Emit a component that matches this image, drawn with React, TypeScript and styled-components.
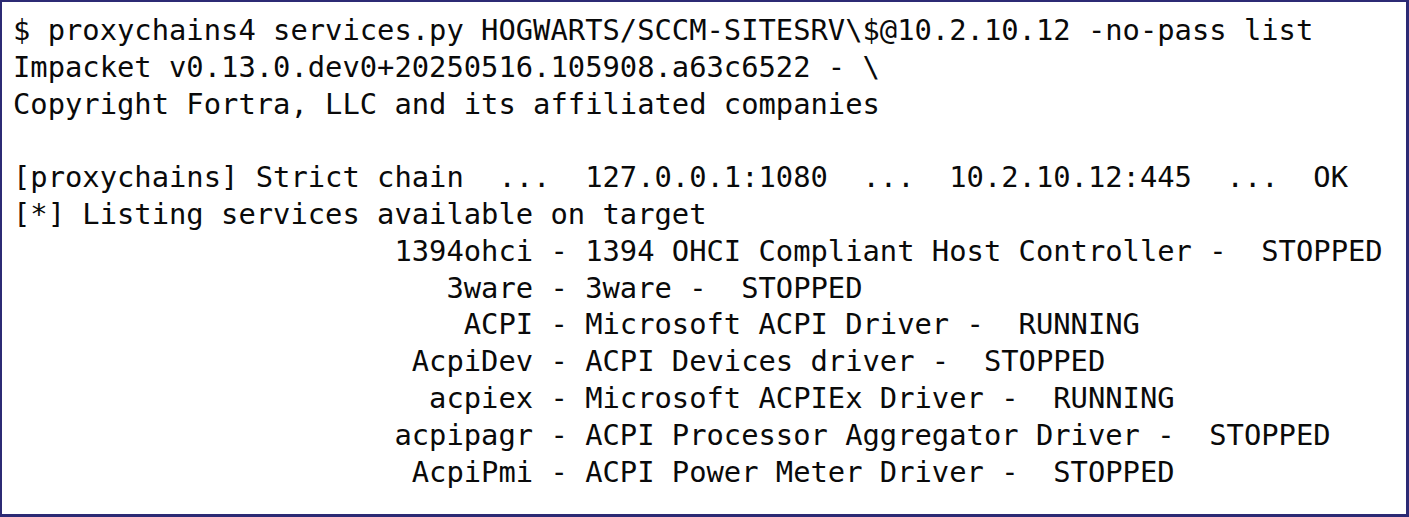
import React from "react";
import styled, { createGlobalStyle } from "styled-components";

const Global = createGlobalStyle`
  html, body {
    margin: 0;
    padding: 0;
    background: #ffffff;
  }
  * { box-sizing: border-box; }
`;

const Frame = styled.div`
  width: 1409px;
  height: 517px;
  background: #ffffff;
  border-style: solid;
  border-color: #2c2a74;
  border-width: 2px 3px 3px 2px;
  padding: 10px 10px 0 11px;
  display: flex;
  flex-direction: column;
  overflow: hidden;
`;

const Line = styled.div`
  font-family: "DejaVu Sans Mono", "Liberation Mono", monospace;
  font-size: 28.8px;
  line-height: 36.8px;
  height: 36.8px;
  color: #0a0a0a;
  white-space: pre;
`;

const pad = (name: string) => name.padStart(30, " ");

const services: [string, string, string][] = [
  ["1394ohci", "1394 OHCI Compliant Host Controller", "STOPPED"],
  ["3ware", "3ware", "STOPPED"],
  ["ACPI", "Microsoft ACPI Driver", "RUNNING"],
  ["AcpiDev", "ACPI Devices driver", "STOPPED"],
  ["acpiex", "Microsoft ACPIEx Driver", "RUNNING"],
  ["acpipagr", "ACPI Processor Aggregator Driver", "STOPPED"],
  ["AcpiPmi", "ACPI Power Meter Driver", "STOPPED"],
];

const header = [
  "$ proxychains4 services.py HOGWARTS/SCCM-SITESRV\\$@10.2.10.12 -no-pass list",
  "Impacket v0.13.0.dev0+20250516.105908.a63c6522 - \\",
  "Copyright Fortra, LLC and its affiliated companies",
  "",
  "[proxychains] Strict chain  ...  127.0.0.1:1080  ...  10.2.10.12:445  ...  OK",
  "[*] Listing services available on target",
];

export default function App() {
  return (
    <>
      <Global />
      <Frame>
        {header.map((t, i) => (
          <Line key={"h" + i}>{t}</Line>
        ))}
        {services.map(([n, d, s]) => (
          <Line key={n}>{`${pad(n)} - ${d} -  ${s}`}</Line>
        ))}
      </Frame>
    </>
  );
}
